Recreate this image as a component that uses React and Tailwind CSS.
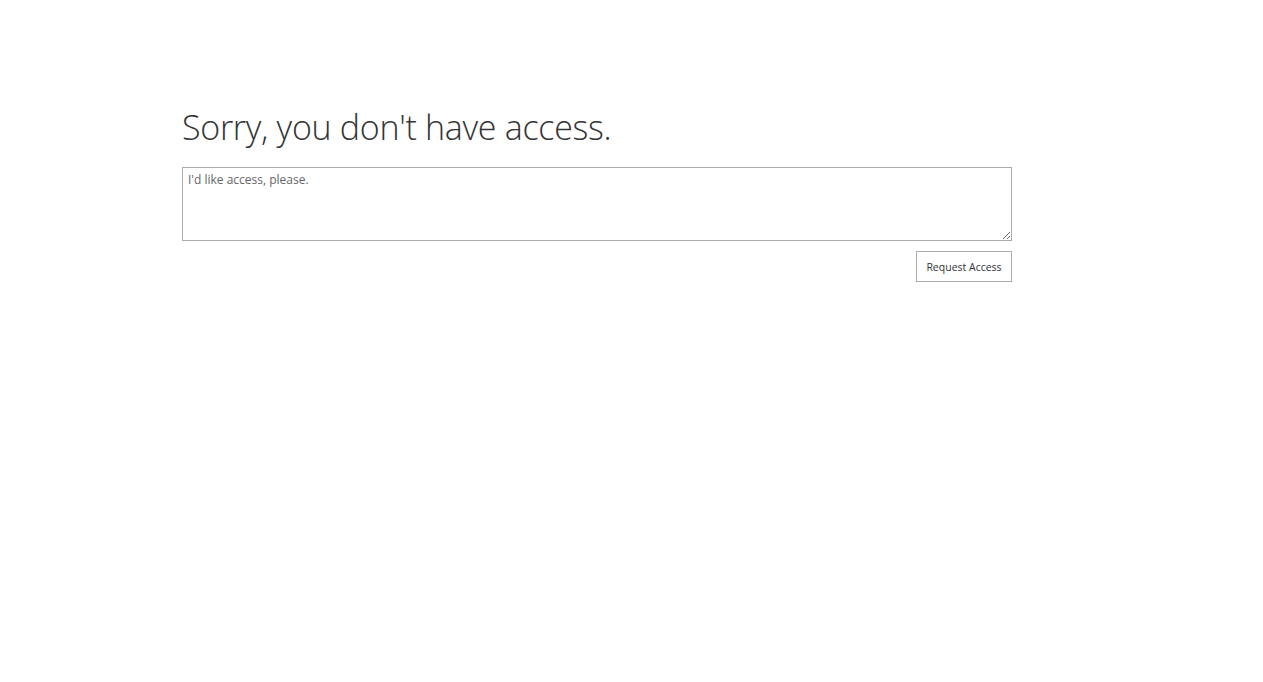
export default function App() {
  return (
    <div className="min-h-screen bg-white" style={{ fontFamily: '"Open Sans", "Noto Sans", sans-serif' }}>
      <div className="ml-[182px] w-[830px] pt-[103px]">
        <h1 className="text-[34px] font-light leading-[48px] text-[#333] tracking-[-0.3px]">
          Sorry, you don't have access.
        </h1>
        <textarea
          className="mt-[16px] block h-[74px] w-[830px] resize-y border border-[#ababab] px-[5px] py-[3px] text-[12px] leading-[18px] text-[#666] outline-none"
          defaultValue="I'd like access, please."
        />
        <div className="mt-[10px] flex justify-end">
          <button className="h-[31px] w-[96px] border border-[#ababab] bg-white pt-[2px] text-[10.5px] text-[#333]">
            Request Access
          </button>
        </div>
      </div>
    </div>
  );
}
